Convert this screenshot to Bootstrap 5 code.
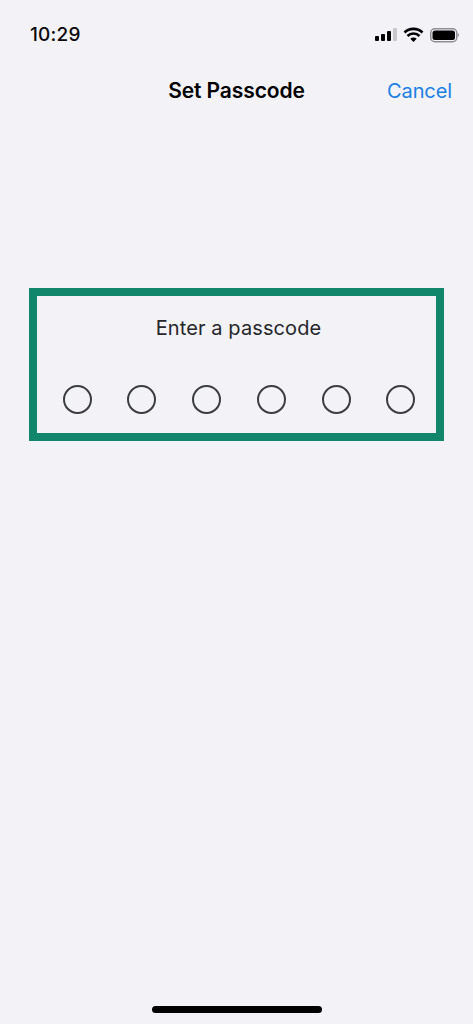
<!DOCTYPE html>
<html lang="en">
<head>
<meta charset="utf-8">
<title>Set Passcode</title>
<link href="https://cdn.jsdelivr.net/npm/bootstrap@5.3.0/dist/css/bootstrap.min.css" rel="stylesheet">
<style>
html,body{height:1024px;overflow:hidden}
body{background:#f2f2f7;font-family:Inter,"Liberation Sans",sans-serif;color:#000}
.screen{height:1024px}
.status{height:68px;padding:24px 14px 0 30px}
.clock{font-size:19px;font-weight:500;line-height:22px;letter-spacing:.2px;color:#0a0a0a}
.stat-icons{margin-top:2px}
.titlebar{height:46px;padding-right:21px}
.ttl{font-size:21px;font-weight:600;line-height:24px;letter-spacing:-.1px}
.cancel{font-size:20px;line-height:24px;color:#1b7fe6;text-decoration:none;letter-spacing:-.1px}
.mainarea{padding:0 29px}
.passbox{margin-top:174px;height:153px;border:8px solid #12866b;padding-top:20px}
.prompt{font-size:20px;line-height:24px;letter-spacing:.1px;color:#26262b;text-align:center;padding-left:4px}
.dots{margin-top:45px;padding-left:25.500px;width:378.500px}
.dot{width:29px;height:29px;border:2px solid #3c3c43;border-radius:50%}
.homebar{width:170px;height:7px;border-radius:4px;background:#000;margin-bottom:11px}
</style>
</head>
<body>
<div class="screen d-flex flex-column">
  <div class="status d-flex justify-content-between align-items-start">
    <span class="clock">10:29</span>
    <svg class="stat-icons" width="84" height="18" viewBox="0 0 84 18" aria-hidden="true">
      <rect x="0" y="10" width="4" height="5" rx="1" fill="#000"/>
      <rect x="6" y="8" width="4" height="7" rx="1" fill="#000"/>
      <rect x="12" y="5" width="4" height="10" rx="1" fill="#000"/>
      <rect x="18" y="2" width="4" height="13" rx="1" fill="#c7c7cc"/>
      <path d="M29.500 6.500a13 13 0 0 1 18 0M32.500 10a8.500 8.500 0 0 1 12 0" fill="none" stroke="#000" stroke-width="2.600"/>
      <path d="M35.300 12.800a4.400 4.400 0 0 1 6.400 0L38.500 16z" fill="#000"/>
      <rect x="55.750" y="2.750" width="26" height="13" rx="4" fill="none" stroke="#8e8e93" stroke-width="1.500"/>
      <rect x="57.500" y="4.500" width="22.500" height="9.500" rx="2.500" fill="#000"/>
      <path d="M82.700 7v4a2 2 0 0 0 1.300-2 2 2 0 0 0-1.300-2z" fill="#8e8e93"/>
    </svg>
  </div>
  <div class="titlebar position-relative d-flex justify-content-end align-items-center">
    <span class="ttl position-absolute start-50 translate-middle-x">Set Passcode</span>
    <a class="cancel" href="#">Cancel</a>
  </div>
  <div class="mainarea">
    <div class="passbox">
      <div class="prompt">Enter a passcode</div>
      <div class="dots d-flex justify-content-between">
        <div class="dot"></div><div class="dot"></div><div class="dot"></div>
        <div class="dot"></div><div class="dot"></div><div class="dot"></div>
      </div>
    </div>
  </div>
  <div class="mt-auto d-flex justify-content-center">
    <div class="homebar"></div>
  </div>
</div>
<script src="https://cdn.jsdelivr.net/npm/bootstrap@5.3.0/dist/js/bootstrap.bundle.min.js"></script>
</body>
</html>
